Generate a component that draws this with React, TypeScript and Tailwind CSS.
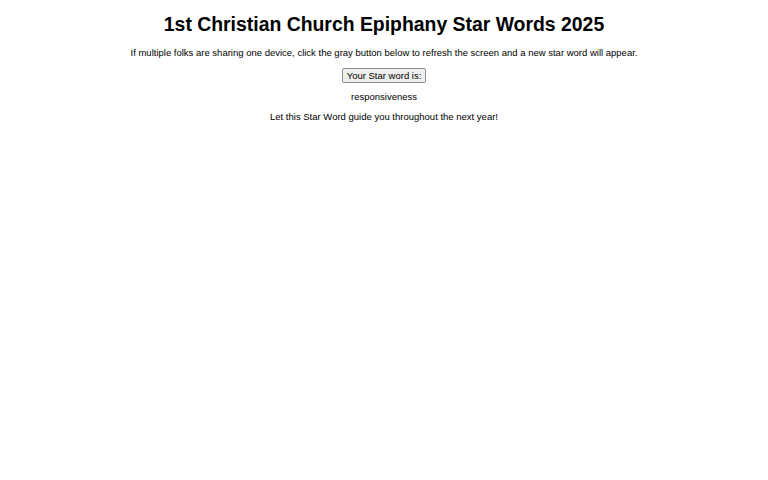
export default function App() {
  return (
    <div className="min-h-[480px] bg-white text-black text-center" style={{ fontFamily: '"Liberation Sans", Arial, sans-serif' }}>
      <div className="pt-[12px]">
        <h1 className="text-[19.4px] leading-[24px] font-bold">1st Christian Church Epiphany Star Words 2025</h1>
        <p className="mt-[11px] text-[9.5px] leading-[12px]">
          If multiple folks are sharing one device, click the gray button below to refresh the screen and a new star word will appear.
        </p>
        <div className="mt-[9px] flex justify-center">
          <button className="h-[15px] px-[4px] text-[9.5px] leading-[12px] bg-[#efefef] border border-[#8f8f8f] rounded-[2px]">
            Your Star word is:
          </button>
        </div>
        <p className="mt-[8px] text-[9.5px] leading-[12px]">responsiveness</p>
        <p className="mt-[8px] text-[9.5px] leading-[12px]">Let this Star Word guide you throughout the next year!</p>
      </div>
    </div>
  );
}
